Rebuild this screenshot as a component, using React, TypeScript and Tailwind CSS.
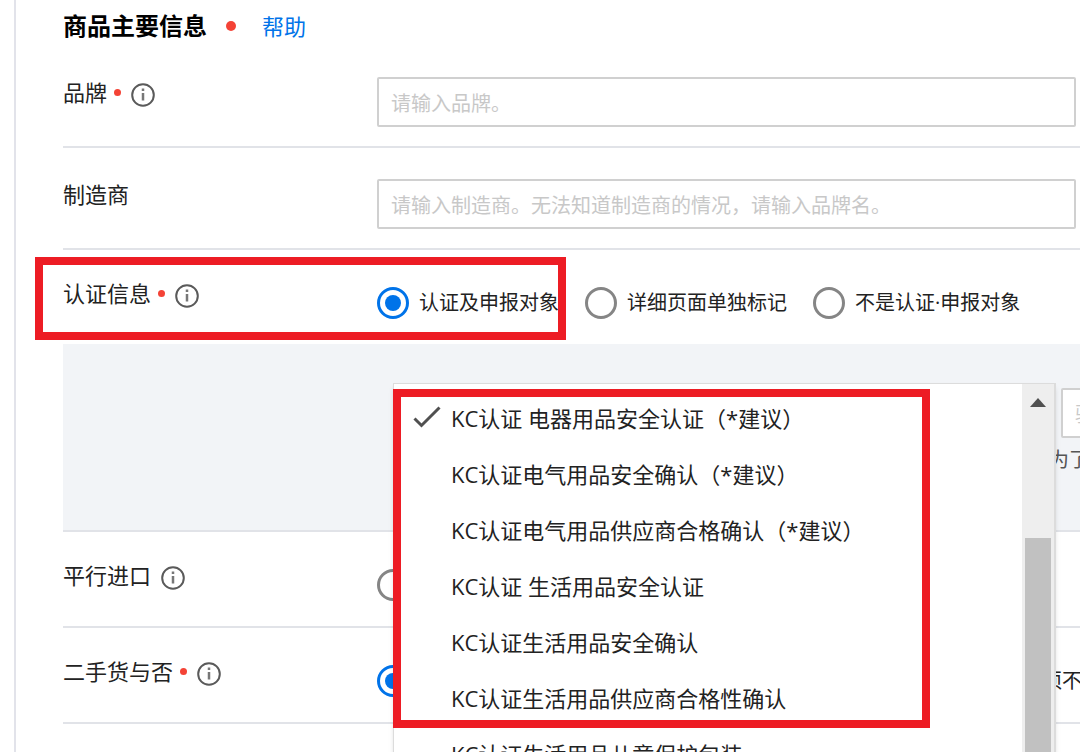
import {useState} from 'react';
import type {ReactNode} from 'react';

const CERT_OPTIONS = [
    'KC认证 电器用品安全认证（*建议）',
    'KC认证电气用品安全确认（*建议）',
    'KC认证电气用品供应商合格确认（*建议）',
    'KC认证 生活用品安全认证',
    'KC认证生活用品安全确认',
    'KC认证生活用品供应商合格性确认',
    'KC认证生活用品儿童保护包装',
];

const CERT_TARGETS = ['认证及申报对象', '详细页面单独标记', '不是认证·申报对象'];

const inputClass =
    'h-[50px] rounded-xs border-2 border-[#d0d0d0] bg-white px-3 pt-[2px] text-[20px] text-[#222] placeholder:text-[#c8c8c8] outline-none';

const radioClass =
    'size-8 shrink-0 appearance-none rounded-full border-3 border-[#858585] bg-white bg-clip-content p-[5px] checked:border-[#0073e9] checked:bg-[#0073e9]';

function InfoButton() {
    return (
        <button type="button" aria-label="说明" className="mt-[6px] ml-[10px] shrink-0">
            <svg viewBox="0 0 24 24" className="size-6" fill="none" stroke="#5a5a5a" strokeWidth="2">
                <circle cx="12" cy="12" r="10.8"/>
                <path d="M12 10v7.5" stroke="#777" strokeWidth="2.5"/>
                <path d="M12 5.5v2.5" stroke="#777" strokeWidth="2.5"/>
            </svg>
        </button>
    );
}

interface FieldLabelProps {
    id: string;
    text: string;
    htmlFor?: string;
    required?: boolean;
    info?: boolean;
}

function FieldLabel({id, text, htmlFor, required, info}: FieldLabelProps) {
    return (
        <div className="flex h-7 w-[314px] shrink-0 items-center">
            {htmlFor ? (
                <label id={id} htmlFor={htmlFor}>{text}</label>
            ) : (
                <span id={id}>{text}</span>
            )}
            {required && <span className="ml-[7px] size-[7px] rounded-full bg-[#f44336]"/>}
            {info && <InfoButton/>}
        </div>
    );
}

/* Red frame laid over the part of the form the reader should look at */
function Highlight({className}: { className: string }) {
    return <div className={`pointer-events-none absolute z-20 border-8 border-[#ed1c24] ${className}`}/>;
}

function InputRow({label, children}: { label: ReactNode; children: ReactNode }) {
    return (
        <div className="flex items-start border-b-2 border-[#e1e3e8] pt-[31px] pr-1 pb-[19px]">
            <div className="pt-px">{label}</div>
            {children}
        </div>
    );
}

function CertMenu() {
    const [selected, setSelected] = useState(0);

    return (
        <div className="absolute top-[39px] left-[330px] z-10 flex w-[663px] border border-r-2 border-[#dcdcdc] bg-white shadow-md">
            <ul role="listbox" aria-label="认证类型" className="min-w-0 grow pt-[6px]">
                {CERT_OPTIONS.map((option, i) => (
                    <li
                        key={option}
                        role="option"
                        aria-selected={i === selected}
                        onClick={() => setSelected(i)}
                        className="flex h-14 items-center gap-[10px] pl-[19px] whitespace-nowrap"
                    >
                        <span className="w-7">
                            {i === selected && (
                                <svg viewBox="0 0 28 24" className="h-6 w-7" fill="none" stroke="#505050" strokeWidth="3">
                                    <path d="M1.5 12.5 8.5 19.5 26.5 1.5"/>
                                </svg>
                            )}
                        </span>
                        {option}
                    </li>
                ))}
            </ul>
            {/* Scroll bar */}
            <div className="flex w-8 shrink-0 flex-col items-center bg-[#eeeeee] pt-[14px]">
                <svg viewBox="0 0 16 9" className="h-[9px] w-4" fill="#505050">
                    <path d="M8 0 16 9H0z"/>
                </svg>
                <div className="mt-[131px] w-[26px] grow bg-[#c1c1c1]"/>
            </div>
            <Highlight className="top-[5px] -left-px h-[339px] w-[537px]"/>
        </div>
    );
}

export default function App() {
    return (
        <div className="h-screen overflow-hidden bg-white pl-[14px] font-['Open_Sans','Noto_Sans_CJK_SC',sans-serif] text-[22px] leading-7 text-[#222]">
            <form className="min-h-full border-l-2 border-[#e2e3ea] pl-[47px]">
                <header className="flex items-center pt-3 pb-[6px]">
                    <h2 className="text-[24px] font-bold text-black">商品主要信息</h2>
                    <span className="ml-[19px] size-[10px] rounded-full bg-[#f44336]"/>
                    <a href="#help" className="ml-[26px] text-[#0073e9]">帮助</a>
                </header>

                <InputRow label={<FieldLabel id="brand-label" htmlFor="brand" text="品牌" required info/>}>
                    <input id="brand" type="text" placeholder="请输入品牌。" className={`min-w-0 grow ${inputClass}`}/>
                </InputRow>

                <InputRow label={<FieldLabel id="maker-label" htmlFor="maker" text="制造商"/>}>
                    <input
                        id="maker"
                        type="text"
                        placeholder="请输入制造商。无法知道制造商的情况，请输入品牌名。"
                        className={`min-w-0 grow ${inputClass}`}
                    />
                </InputRow>

                {/* Certification */}
                <div className="relative flex h-[94px] items-start pt-[29px]">
                    <FieldLabel id="cert-label" text="认证信息" required info/>
                    <div role="radiogroup" aria-labelledby="cert-label" className="mt-2 flex gap-[26px] text-[20px]">
                        {CERT_TARGETS.map((target, i) => (
                            <label key={target} className="flex shrink-0 items-center gap-[10px] whitespace-nowrap">
                                <input type="radio" name="cert" defaultChecked={i === 0} className={radioClass}/>
                                {target}
                            </label>
                        ))}
                    </div>
                    <Highlight className="top-[7px] -left-7 h-[83px] w-[531px]"/>
                </div>
                <div className="relative border-b-2 border-[#e1e3e8] bg-[#f2f4f7] pt-11 pb-14">
                    <CertMenu/>
                    <div className="flex overflow-hidden pl-[998px]">
                        <input
                            type="text"
                            aria-label="认证号码"
                            placeholder="验"
                            className={`w-[320px] shrink-0 ${inputClass}`}
                        />
                    </div>
                    <p className="mt-2 overflow-hidden pl-[986px] text-[20px] whitespace-nowrap text-[#555]">为了</p>
                </div>

                <div className="flex h-24 items-start border-b-2 border-[#e1e3e8] pt-[29px]">
                    <FieldLabel id="import-label" text="平行进口" info/>
                    <input type="radio" name="import" aria-labelledby="import-label" className={`mt-2 ${radioClass}`}/>
                </div>

                <div className="flex h-24 items-start overflow-hidden border-b-2 border-[#e1e3e8] pt-[29px]">
                    <FieldLabel id="used-label" text="二手货与否" required info/>
                    <div className="mt-2 flex items-center">
                        <input
                            type="radio"
                            name="used"
                            aria-labelledby="used-label"
                            defaultChecked
                            className={radioClass}
                        />
                        <p className="ml-[633px] text-[20px] whitespace-nowrap">须不</p>
                    </div>
                </div>
            </form>
        </div>
    );
}
